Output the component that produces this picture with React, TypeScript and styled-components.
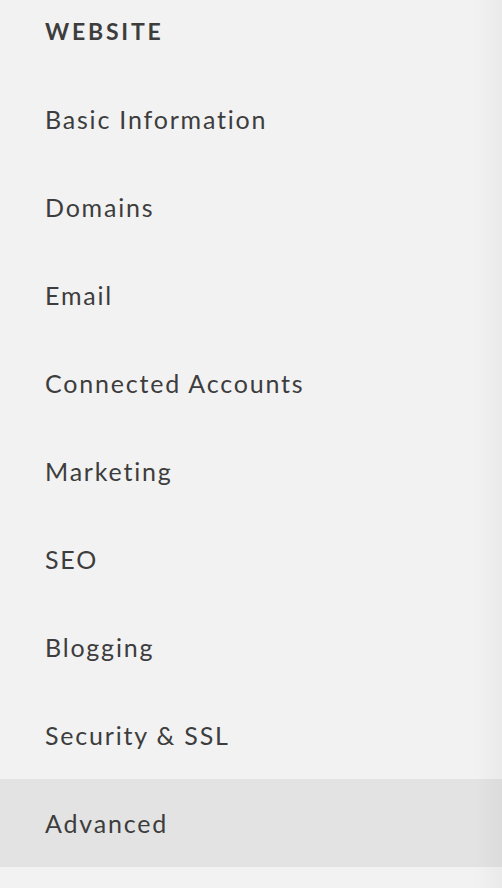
import styled, { createGlobalStyle } from "styled-components";

const GlobalStyle = createGlobalStyle`
  html, body {
    margin: 0;
    padding: 0;
    background: #f2f2f2;
  }
  body {
    font-family: Lato, "Liberation Sans", sans-serif;
    -webkit-font-smoothing: antialiased;
  }
`;

const Panel = styled.nav`
  position: relative;
  width: 502px;
  height: 888px;
  overflow: hidden;
  background: #f2f2f2;

  /* faint shade along the right edge */
  &::after {
    content: "";
    position: absolute;
    top: 0;
    right: 0;
    bottom: 0;
    width: 28px;
    pointer-events: none;
    background: linear-gradient(to right, rgba(0, 0, 0, 0), rgba(0, 0, 0, 0.035));
  }
`;

const Heading = styled.h2`
  margin: 0;
  height: 75px;
  padding: 0 45px;
  display: flex;
  align-items: flex-start;
  padding-top: 17px;
  box-sizing: border-box;
  font-size: 23px;
  font-weight: 700;
  letter-spacing: 2.8px;
  color: #3d3d3d;
`;

const List = styled.ul`
  list-style: none;
  margin: 0;
  padding: 0;
`;

const Item = styled.li<{ $active?: boolean }>`
  height: 88px;
  padding: 0 45px;
  display: flex;
  align-items: center;
  font-size: 25px;
  letter-spacing: 1.8px;
  color: #3d3d3d;
  background: ${({ $active }) => ($active ? "#e3e3e3" : "transparent")};
  cursor: pointer;
`;

const items = [
  "Basic Information",
  "Domains",
  "Email",
  "Connected Accounts",
  "Marketing",
  "SEO",
  "Blogging",
  "Security & SSL",
  "Advanced",
];

const App = () => {
  return (
    <>
      <GlobalStyle />
      <Panel>
        <Heading>WEBSITE</Heading>
        <List>
          {items.map((label) => (
            <Item key={label} $active={label === "Advanced"}>
              {label}
            </Item>
          ))}
        </List>
      </Panel>
    </>
  );
};
export default App;
